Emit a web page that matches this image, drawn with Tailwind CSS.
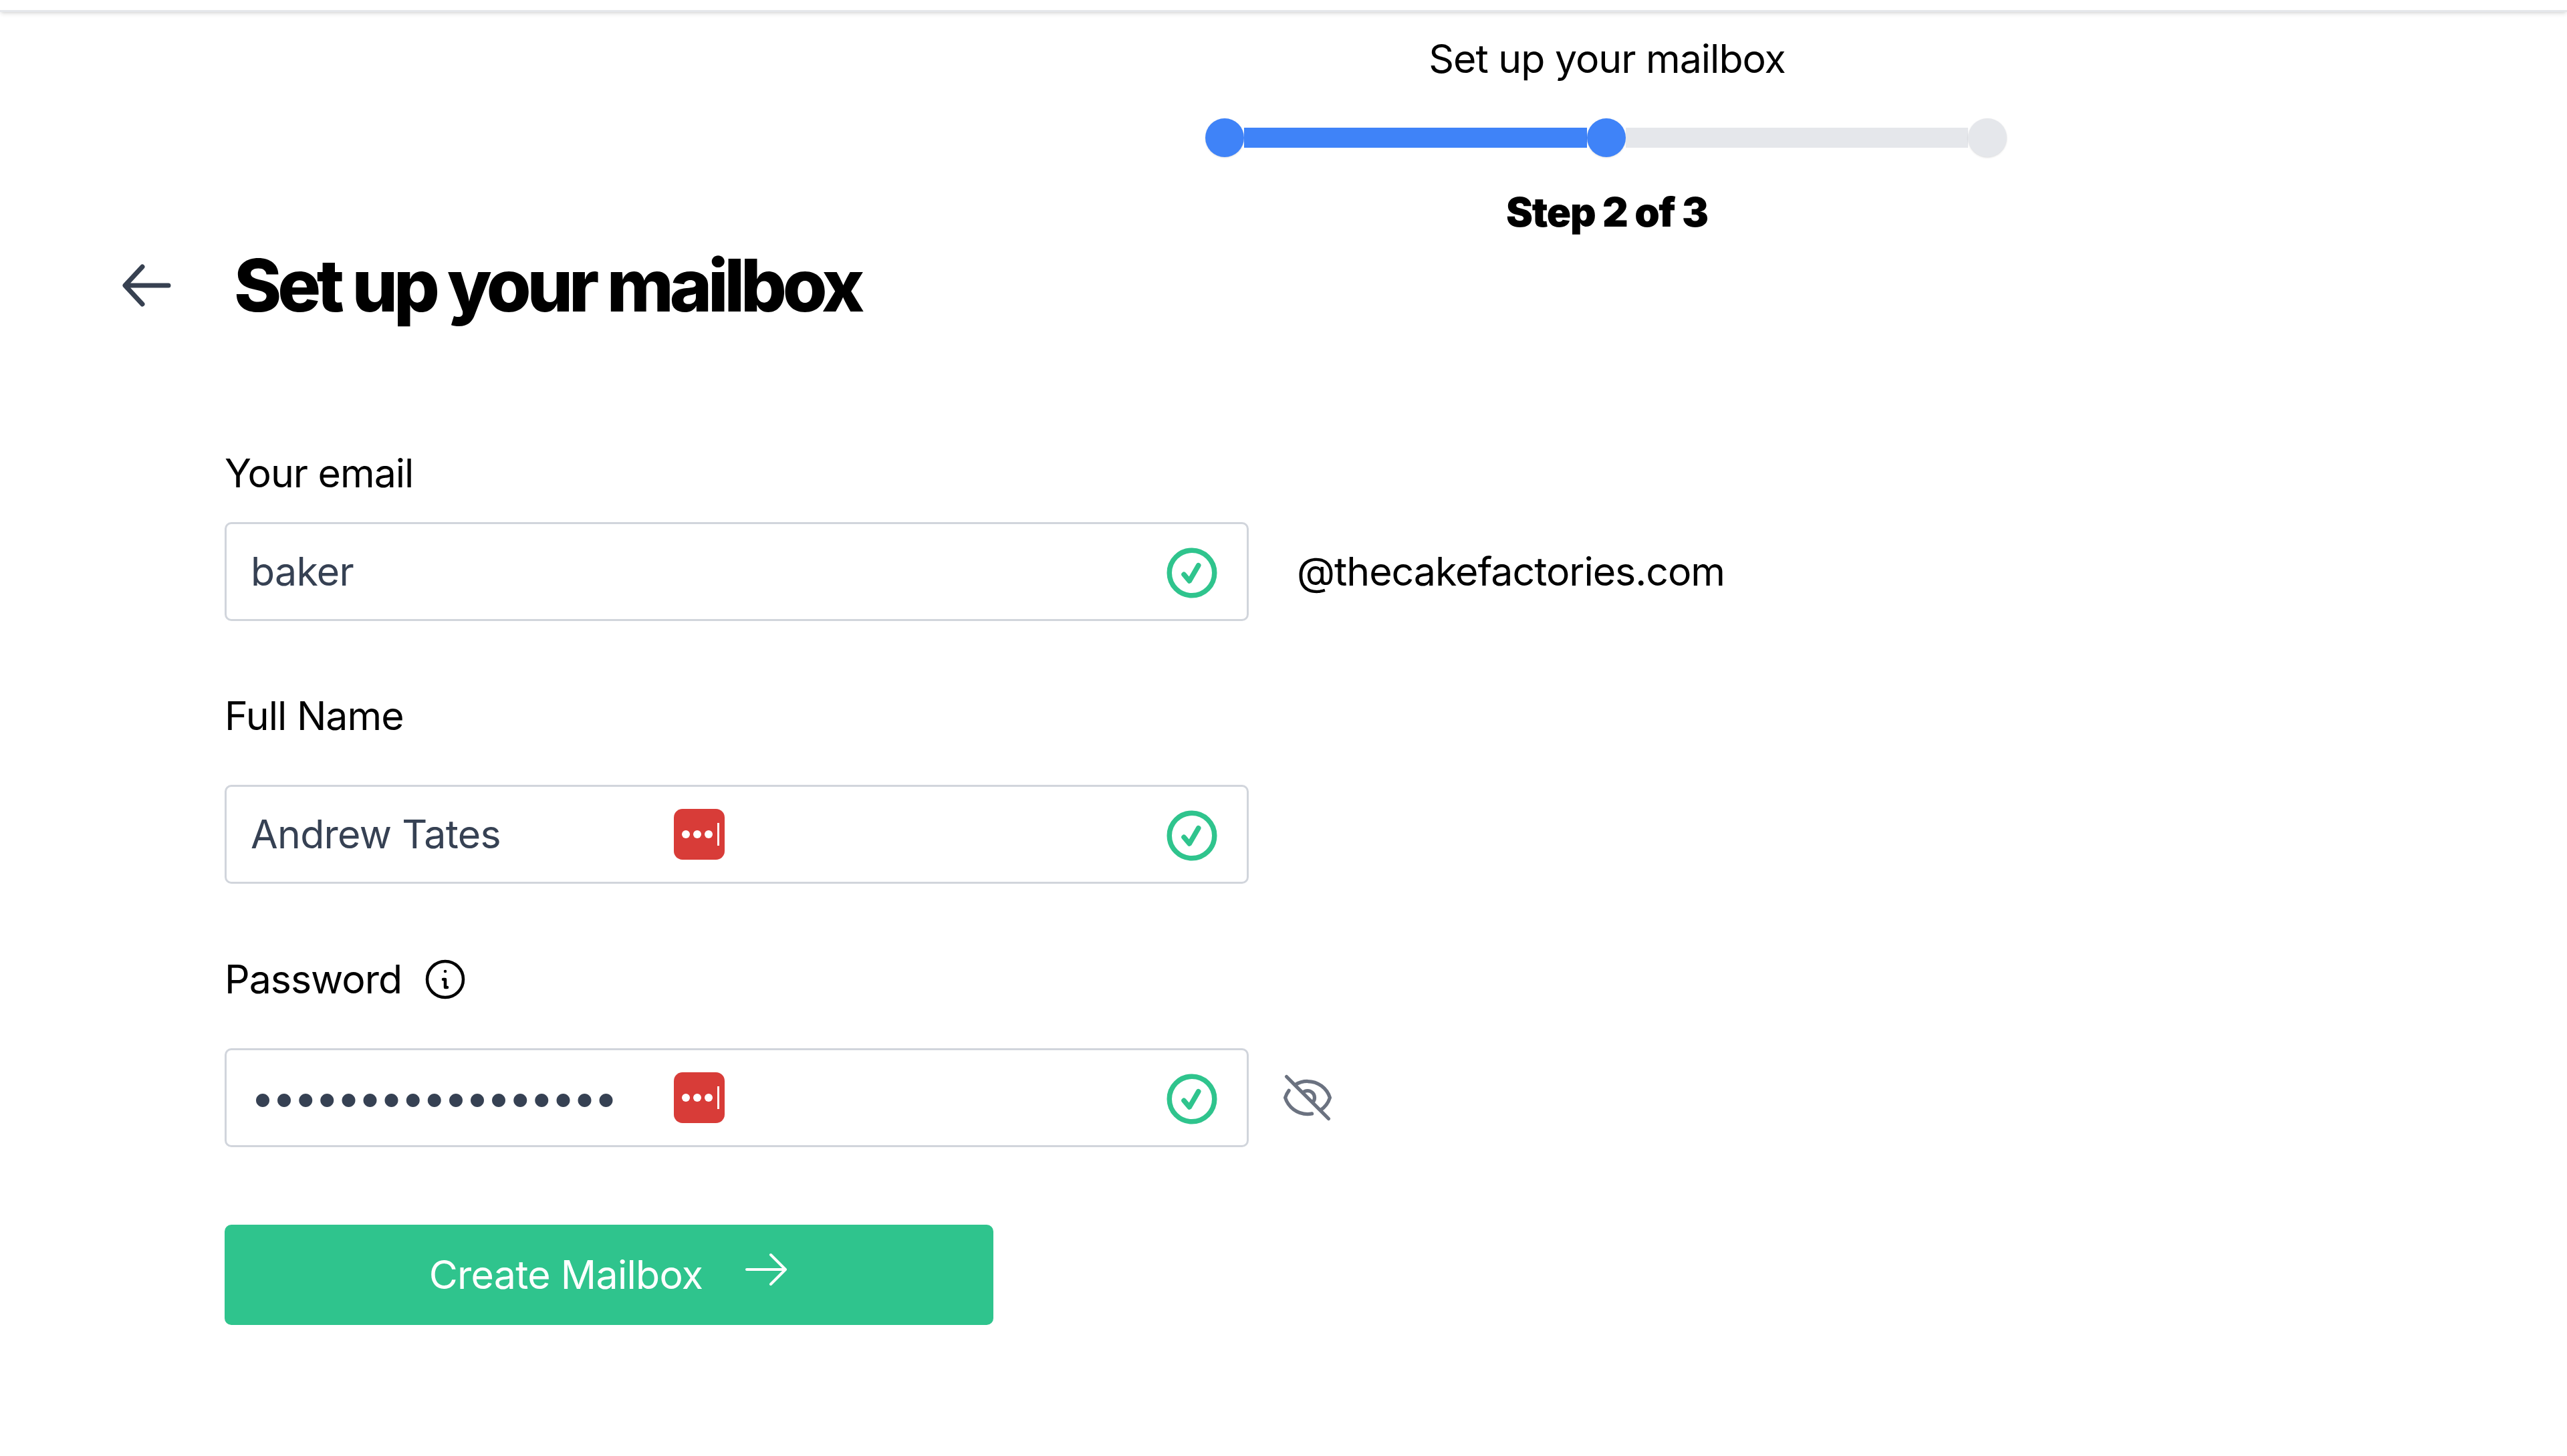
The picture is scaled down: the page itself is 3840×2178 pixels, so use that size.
<!DOCTYPE html>
<html lang="en">
<head>
    <meta charset="UTF-8">
    <title>Set up your mailbox</title>
    <script src="https://cdn.jsdelivr.net/npm/@tailwindcss/browser@4"></script>
</head>
<body class="bg-white font-['Inter',sans-serif] text-black text-[59px] tracking-[-1px] w-[3840px] h-[2178px] overflow-hidden">

    <div class="h-[18px] bg-white border-b-[3px] border-gray-200 shadow-md"></div>

    <!-- stepper -->
    <div class="ml-[1803px] w-[1199px] flex flex-col items-center">
        <div class="mt-[34px] h-[72px] leading-[72px] pl-[3px]">Set up your mailbox</div>
        <div class="mt-[53px] w-full flex items-center">
            <div class="w-[58px] h-[58px] rounded-full bg-[#3f83f8] shadow-sm shrink-0"></div>
            <div class="flex-1 h-[30px] bg-[#3f83f8]"></div>
            <div class="w-[58px] h-[58px] rounded-full bg-[#3f83f8] shadow-sm shrink-0"></div>
            <div class="flex-1 h-[30px] bg-gray-200"></div>
            <div class="w-[58px] h-[58px] rounded-full bg-gray-200 shadow-sm shrink-0"></div>
        </div>
        <div class="mt-[46px] h-[72px] leading-[72px] text-[60px] font-black tracking-[-1.3px] pl-[3px]">Step 2 of 3</div>
    </div>

    <!-- heading -->
    <div class="flex items-center h-[120px] mt-[14px] pl-[183px]">
        <svg class="w-[73px] h-[64px]" viewBox="0 0 73 64" fill="none" stroke="#374151" stroke-width="7" stroke-linecap="round" stroke-linejoin="round">
            <path d="M69 32H5M30 4 4 32l26 28"/>
        </svg>
        <h1 class="ml-[94px] text-[108px] leading-[120px] font-extrabold tracking-[-6.15px]">Set up your mailbox</h1>
    </div>

    <!-- form -->
    <div class="ml-[336px] mt-[185px]">
        <label class="block h-[72px] leading-[72px]">Your email</label>
        <div class="mt-[37px] flex items-center">
            <div class="w-[1532px] h-[148px] rounded-[10px] border-[3px] border-gray-300 flex items-center pl-[36px] pr-[37px] tracking-[-0.7px] text-gray-700">
                <span>baker</span>
                <svg class="ml-auto mt-[3px] w-[90px] h-[90px]" viewBox="0 0 24 24" fill="none" stroke="#2fc48d" stroke-width="2" stroke-linecap="round" stroke-linejoin="round"><path d="M8.8 12.6l2.2 2.6 3.6-6.2M21 12a9 9 0 11-18 0 9 9 0 0118 0z"/></svg>
            </div>
            <span class="ml-[72px]">@thecakefactories.com</span>
        </div>

        <label class="block mt-[106px] h-[72px] leading-[72px]">Full Name</label>
        <div class="mt-[67px] w-[1532px] h-[148px] rounded-[10px] border-[3px] border-gray-300 flex items-center pl-[36px] pr-[37px] tracking-[-0.7px] text-gray-700">
            <span class="w-[633px]">Andrew Tates</span>
            <svg class="w-[76px] h-[76px]" viewBox="0 0 76 76"><rect width="76" height="76" rx="13" fill="#d83c38"/><circle cx="18" cy="38" r="6" fill="#fff"/><circle cx="35" cy="38" r="6" fill="#fff"/><circle cx="52" cy="38" r="6" fill="#fff"/><rect x="65" y="21" width="3" height="34" fill="#fff"/></svg>
            <svg class="ml-auto mt-[3px] w-[90px] h-[90px]" viewBox="0 0 24 24" fill="none" stroke="#2fc48d" stroke-width="2" stroke-linecap="round" stroke-linejoin="round"><path d="M8.8 12.6l2.2 2.6 3.6-6.2M21 12a9 9 0 11-18 0 9 9 0 0118 0z"/></svg>
        </div>

        <div class="mt-[107px] h-[72px] flex items-center">
            <label class="leading-[72px]">Password</label>
            <svg class="ml-[29px] w-[72px] h-[72px]" viewBox="0 0 24 24" fill="none" stroke="#000" stroke-width="1.5" stroke-linecap="round" stroke-linejoin="round"><path d="M13 16h-1v-4h-1m1-4h.01M21 12a9 9 0 11-18 0 9 9 0 0118 0z"/></svg>
        </div>
        <div class="mt-[67px] flex items-center">
            <div class="w-[1532px] h-[148px] rounded-[10px] border-[3px] border-gray-300 flex items-center pl-[36px] pr-[37px] text-gray-700">
                <span class="w-[633px] text-[64px] tracking-[-3.9px]">•••••••••••••••••</span>
                <svg class="w-[76px] h-[76px]" viewBox="0 0 76 76"><rect width="76" height="76" rx="13" fill="#d83c38"/><circle cx="18" cy="38" r="6" fill="#fff"/><circle cx="35" cy="38" r="6" fill="#fff"/><circle cx="52" cy="38" r="6" fill="#fff"/><rect x="65" y="21" width="3" height="34" fill="#fff"/></svg>
                <svg class="ml-auto mt-[3px] w-[90px] h-[90px]" viewBox="0 0 24 24" fill="none" stroke="#2fc48d" stroke-width="2" stroke-linecap="round" stroke-linejoin="round"><path d="M8.8 12.6l2.2 2.6 3.6-6.2M21 12a9 9 0 11-18 0 9 9 0 0118 0z"/></svg>
            </div>
            <svg class="ml-[46px] w-[84px] h-[84px]" viewBox="0 0 24 24" fill="none" stroke="#6b7280" stroke-width="1.5" stroke-linecap="round" stroke-linejoin="round"><path d="M13.875 18.825A10.05 10.05 0 0112 19c-4.478 0-8.268-2.943-9.543-7a9.97 9.97 0 011.563-3.029m5.858.908a3 3 0 114.243 4.243M9.878 9.878l4.242 4.242M9.88 9.88l-3.29-3.29m7.532 7.532l3.29 3.29M3 3l3.59 3.59m0 0A9.953 9.953 0 0112 5c4.478 0 8.268 2.943 9.543 7a10.025 10.025 0 01-4.132 5.411m0 0L21 21"/></svg>
        </div>

        <button class="mt-[116px] w-[1150px] h-[150px] pr-[3px] rounded-[10px] bg-[#2fc48d] text-white flex items-center justify-center">
            <span class="tracking-[-0.7px]">Create Mailbox</span>
            <svg class="ml-[64px] mb-[16px] w-[62px] h-[50px]" viewBox="0 0 62 50" fill="none" stroke="#fff" stroke-width="4" stroke-linecap="round" stroke-linejoin="round"><path d="M2 25h57M38 3l22 22-22 22"/></svg>
        </button>
    </div>

</body>
</html>
